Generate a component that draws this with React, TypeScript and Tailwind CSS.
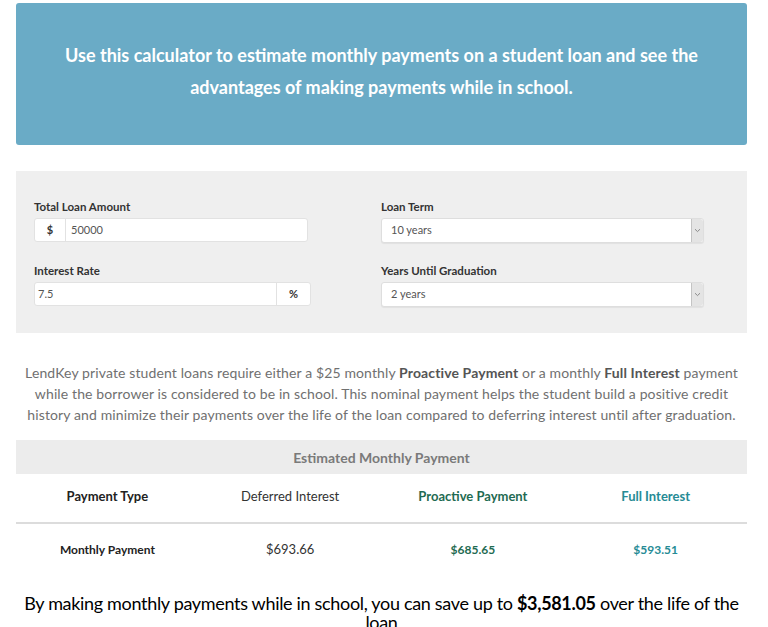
const font = { fontFamily: "Lato, 'Open Sans', sans-serif" };

function Chevron() {
  return (
    <svg width="7" height="5" viewBox="0 0 7 5" fill="none">
      <path d="M1 1.2 L3.5 3.6 L6 1.2" stroke="#8a8a8a" strokeWidth="1" />
    </svg>
  );
}

function SelectBox({ value }: { value: string }) {
  return (
    <div className="flex h-[25px] w-[323px] rounded-[3px] border border-[#dedede] bg-white shadow-[0_1px_1px_rgba(0,0,0,0.06)]">
      <div className="flex flex-1 items-center pl-[9px] text-[11px] text-[#555]">{value}</div>
      <div className="flex w-[12px] items-center justify-center rounded-r-[3px] border-l border-[#c4c4c4] bg-[#e4e4e4]">
        <Chevron />
      </div>
    </div>
  );
}

function Label({ children }: { children: string }) {
  return <div className="mb-[3px] text-[11.5px] font-bold leading-[16px] text-[#333]">{children}</div>;
}

export default function App() {
  return (
    <div className="min-h-[627px] bg-white" style={font}>
      <div className="ml-[16px] w-[731px] pt-[3px]">
        <div className="rounded-[3px] bg-[#6aabc6] px-[45px] pt-[36px] pb-[42px] text-center text-[18px] font-bold leading-[32px] text-white">
          Use this calculator to estimate monthly payments on a student loan and see the advantages of making payments while in school.
        </div>

        <div className="mt-[26px] bg-[#efefef] px-[18px] pt-[28px] pb-[26px]">
          <div className="grid grid-cols-[347px_1fr] gap-y-[20px]">
            <div>
              <Label>Total Loan Amount</Label>
              <div className="flex h-[24px] w-[274px] rounded-[3px] border border-[#e2e2e2] bg-white text-[11px]">
                <div className="flex w-[31px] items-center justify-center border-r border-[#e2e2e2] font-bold text-[#333]">$</div>
                <div className="flex flex-1 items-center pl-[5px] text-[#555]">50000</div>
              </div>
            </div>
            <div>
              <Label>Loan Term</Label>
              <SelectBox value="10 years" />
            </div>
            <div>
              <Label>Interest Rate</Label>
              <div className="flex h-[24px] w-[277px] rounded-[3px] border border-[#e2e2e2] bg-white text-[11px]">
                <div className="flex flex-1 items-center pl-[3px] text-[#555]">7.5</div>
                <div className="flex w-[34px] items-center justify-center border-l border-[#e2e2e2] font-bold text-[#333]">%</div>
              </div>
            </div>
            <div>
              <Label>Years Until Graduation</Label>
              <SelectBox value="2 years" />
            </div>
          </div>
        </div>

        <p className="mt-[29px] px-[6px] text-center text-[14px] leading-[21px] tracking-[0.12px] text-[#707070]">
          LendKey private student loans require either a $25 monthly <span className="font-bold text-[#555]">Proactive Payment</span> or a monthly <span className="font-bold text-[#555]">Full Interest</span> payment while the borrower is considered to be in school. This nominal payment helps the student build a positive credit history and minimize their payments over the life of the loan compared to deferring interest until after graduation.
        </p>

        <div className="mt-[15px]">
          <div className="flex h-[34px] items-center justify-center bg-[#ececec] text-[14px] font-bold text-[#7a7a7a]">
            Estimated Monthly Payment
          </div>
          <div className="grid h-[50px] grid-cols-4 items-center border-b-2 border-[#dcdcdc] pb-[2px] text-center text-[13px]">
            <div className="font-bold text-[#222]">Payment Type</div>
            <div className="text-[#333]">Deferred Interest</div>
            <div className="font-bold text-[#1f6b52]">Proactive Payment</div>
            <div className="font-bold text-[#268b95]">Full Interest</div>
          </div>
          <div className="grid h-[52px] grid-cols-4 items-center text-center">
            <div className="text-[12px] font-bold text-[#222]">Monthly Payment</div>
            <div className="text-[13px] text-[#333]">$693.66</div>
            <div className="text-[12px] font-bold text-[#1f6b52]">$685.65</div>
            <div className="text-[12px] font-bold text-[#268b95]">$593.51</div>
          </div>
        </div>

        <p className="mt-[18px] text-center text-[18px] leading-[19px] tracking-[-0.32px] text-black">
          By making monthly payments while in school, you can save up to <span className="font-bold">$3,581.05</span> over the life of the loan
        </p>
      </div>
    </div>
  );
}
